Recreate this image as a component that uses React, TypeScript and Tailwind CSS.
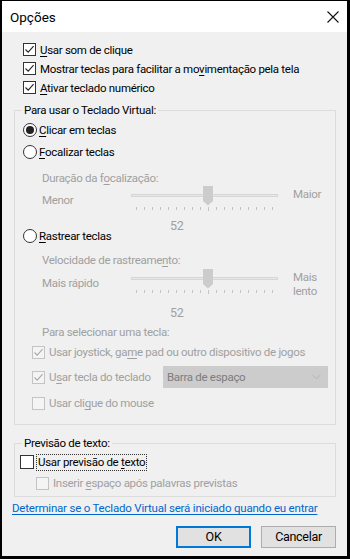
import type { ReactNode } from 'react'

const DIS = 'text-[#a0a0a0]'

function U({ children }: { children: ReactNode }) {
  return <span className="underline underline-offset-2">{children}</span>
}

function Box({ checked, disabled }: { checked?: boolean; disabled?: boolean }) {
  return (
    <span
      className={
        'flex h-[13px] w-[13px] shrink-0 items-center justify-center border ' +
        (disabled ? 'border-[#c4c4c4] bg-[#f4f4f4]' : 'border-[#333333] bg-white')
      }
    >
      {checked && (
        <svg width="11" height="11" viewBox="0 0 11 11">
          <path
            d="M1.5 5.5 L4.2 8.2 L9.6 2.2"
            fill="none"
            stroke={disabled ? '#a8a8a8' : '#222222'}
            strokeWidth="1.1"
          />
        </svg>
      )}
    </span>
  )
}

function Check({
  checked,
  disabled,
  children,
  className = '',
}: {
  checked?: boolean
  disabled?: boolean
  children: ReactNode
  className?: string
}) {
  return (
    <div className={'flex items-center gap-[4px] whitespace-nowrap ' + className}>
      <Box checked={checked} disabled={disabled} />
      <span className={disabled ? DIS : 'text-black'}>{children}</span>
    </div>
  )
}

function Radio({ checked, children, className = '' }: { checked?: boolean; children: ReactNode; className?: string }) {
  return (
    <div className={'flex items-center gap-[2px] pl-[8px] ' + className}>
      <span className="flex h-[14px] w-[14px] items-center justify-center rounded-full border border-[#333333] bg-white">
        {checked && <span className="h-[8px] w-[8px] rounded-full bg-[#222222]" />}
      </span>
      <span className="text-black">{children}</span>
    </div>
  )
}

function Slider({ left, right }: { left: string; right: ReactNode }) {
  const ticks = Array.from({ length: 18 }, (_, i) => i)
  return (
    <div className={'flex h-[28px] pl-[27px] ' + DIS}>
      <div className="flex h-full w-[89px] items-center">{left}</div>
      <div className="relative h-full w-[147px]">
        <div className="absolute top-[8px] left-0 right-0 h-[3px] border border-[#d6d6d6] bg-[#e7e7e7]" />
        <svg className="absolute top-0 left-[72px]" width="10" height="20" viewBox="0 0 10 20">
          <path d="M0 0 H10 V15 L5 19.5 L0 15 Z" fill="#cccccc" />
        </svg>
        <div className="absolute top-[21px] left-[5px] right-[5px] flex justify-between">
          {ticks.map((t) => (
            <span key={t} className={'w-px bg-[#c4c4c4] ' + (t === 9 ? 'h-[4px]' : 'h-[3px]')} />
          ))}
        </div>
      </div>
      <div className="ml-[15px] pt-px leading-[14px]">{right}</div>
    </div>
  )
}

export default function App() {
  return (
    <div className="h-[559px] w-[350px] bg-black pt-px pr-[3px] pb-[3px] pl-[2px] font-['Roboto',sans-serif] text-[11.5px] leading-[16px] tracking-[-0.3px] whitespace-nowrap">
      <div className="flex h-full flex-col bg-[#f0f0f0]">
        <div className="flex h-[31px] items-center justify-between bg-white pr-[8px] pl-[8px]">
          <span className="text-[13.5px] tracking-normal text-black">Opções</span>
          <svg width="12" height="12" viewBox="0 0 12 12">
            <path d="M0.5 0.5 L11.5 11.5 M11.5 0.5 L0.5 11.5" stroke="#111" strokeWidth="1.1" />
          </svg>
        </div>

        <div className="pt-[8px] pl-[21px]">
          <Check checked className="h-[19px]">
            <U>U</U>sar som de clique
          </Check>
          <Check checked className="h-[19px]">
            Mostrar teclas para facilitar a mo<U>v</U>imentação pela tela
          </Check>
          <Check checked className="h-[19px]">
            <U>A</U>tivar teclado numérico
          </Check>
        </div>

        <fieldset className="mt-[5px] mr-[11px] ml-[12px] border border-[#dcdcdc] pb-[11px]">
          <legend className="ml-[7px] h-[16px] px-[2px] leading-[16px] text-black">Para usar o Teclado Virtual:</legend>
          <Radio checked className="h-[23px]">
            <U>C</U>licar em teclas
          </Radio>
          <Radio className="h-[22px]">
            <U>F</U>ocalizar teclas
          </Radio>
          <div className={'mt-[7px] flex h-[16px] items-center pl-[27px] ' + DIS}>
            Duração da f<U>o</U>calização:
          </div>
          <Slider left="Menor" right="Maior" />
          <div className={'mt-[6px] flex h-[12px] items-center pl-[155px] text-[12.5px] ' + DIS}>52</div>
          <Radio className="-mt-[7px] h-[22px]">
            <U>R</U>astrear teclas
          </Radio>
          <div className={'mt-[5px] flex h-[16px] items-center pl-[27px] ' + DIS}>
            Velocidade de rastreame<U>n</U>to:
          </div>
          <div className="mt-px">
            <Slider
              left="Mais rápido"
              right={
                <>
                  Mais
                  <br />
                  lento
                </>
              }
            />
          </div>
          <div className={'mt-[10px] flex h-[12px] items-center pl-[155px] text-[12.5px] ' + DIS}>52</div>
          <div className={'mt-[5px] flex h-[16px] items-center pl-[27px] ' + DIS}>Para selecionar uma tecla:</div>
          <div className="pl-[17px]">
            <Check checked disabled className="mt-[2px] h-[20px]">
              Usar joystick, ga<U>m</U>e pad ou outro dispositivo de jogos
            </Check>
            <div className="mt-[3px] flex h-[24px] items-center">
              <Check checked disabled>
                U<U>s</U>ar tecla do teclado
              </Check>
              <div className="mr-[7px] ml-auto flex h-[22px] w-[165px] items-center justify-between bg-[#cccccc] pr-[7px] pl-[4px] text-[#7d7d7d]">
                <span>Barra de espaço</span>
                <svg width="9" height="6" viewBox="0 0 9 6">
                  <path d="M0.5 0.8 L4.5 4.8 L8.5 0.8" fill="none" stroke="#b4b4b4" strokeWidth="1" />
                </svg>
              </div>
            </div>
            <Check disabled className="mt-[4px] h-[20px]">
              Usar cli<U>q</U>ue do mouse
            </Check>
          </div>
        </fieldset>

        <fieldset className="mt-[10px] mr-[11px] ml-[12px] border border-[#dcdcdc] pb-[3px]">
          <legend className="ml-[7px] h-[16px] px-[2px] leading-[16px] text-black">Previsão de texto:</legend>
          <div className="mt-px flex h-[20px] items-center gap-[2px] pl-[5px]">
            <span className="h-[14px] w-[14px] border border-[#333333] bg-white" />
            <span className="border border-dotted border-[#333333] px-px leading-[15px] text-black">
              Usar previsão de <U>t</U>exto
            </span>
          </div>
          <div className="mt-px pl-[21px]">
            <Check disabled className="h-[20px]">
              Inserir <U>e</U>spaço após palavras previstas
            </Check>
          </div>
        </fieldset>

        <div className="mt-[3px] flex h-[16px] items-center pl-[10px]">
          <span className="tracking-[-0.2px] text-[#0066cc] underline underline-offset-2">
            Determinar se o Teclado Virtual será iniciado quando eu entrar
          </span>
        </div>

        <div className="mt-[10px] flex justify-end gap-[10px] pr-[11px]">
          <button
            type="button"
            className="flex h-[22px] w-[75px] items-center justify-center border-2 border-[#0078d7] bg-[#e1e1e1] text-[12.5px] text-black"
          >
            OK
          </button>
          <button
            type="button"
            className="flex h-[22px] w-[75px] items-center justify-center border border-[#adadad] bg-[#e1e1e1] text-[12.5px] text-black"
          >
            Cancelar
          </button>
        </div>
      </div>
    </div>
  )
}
